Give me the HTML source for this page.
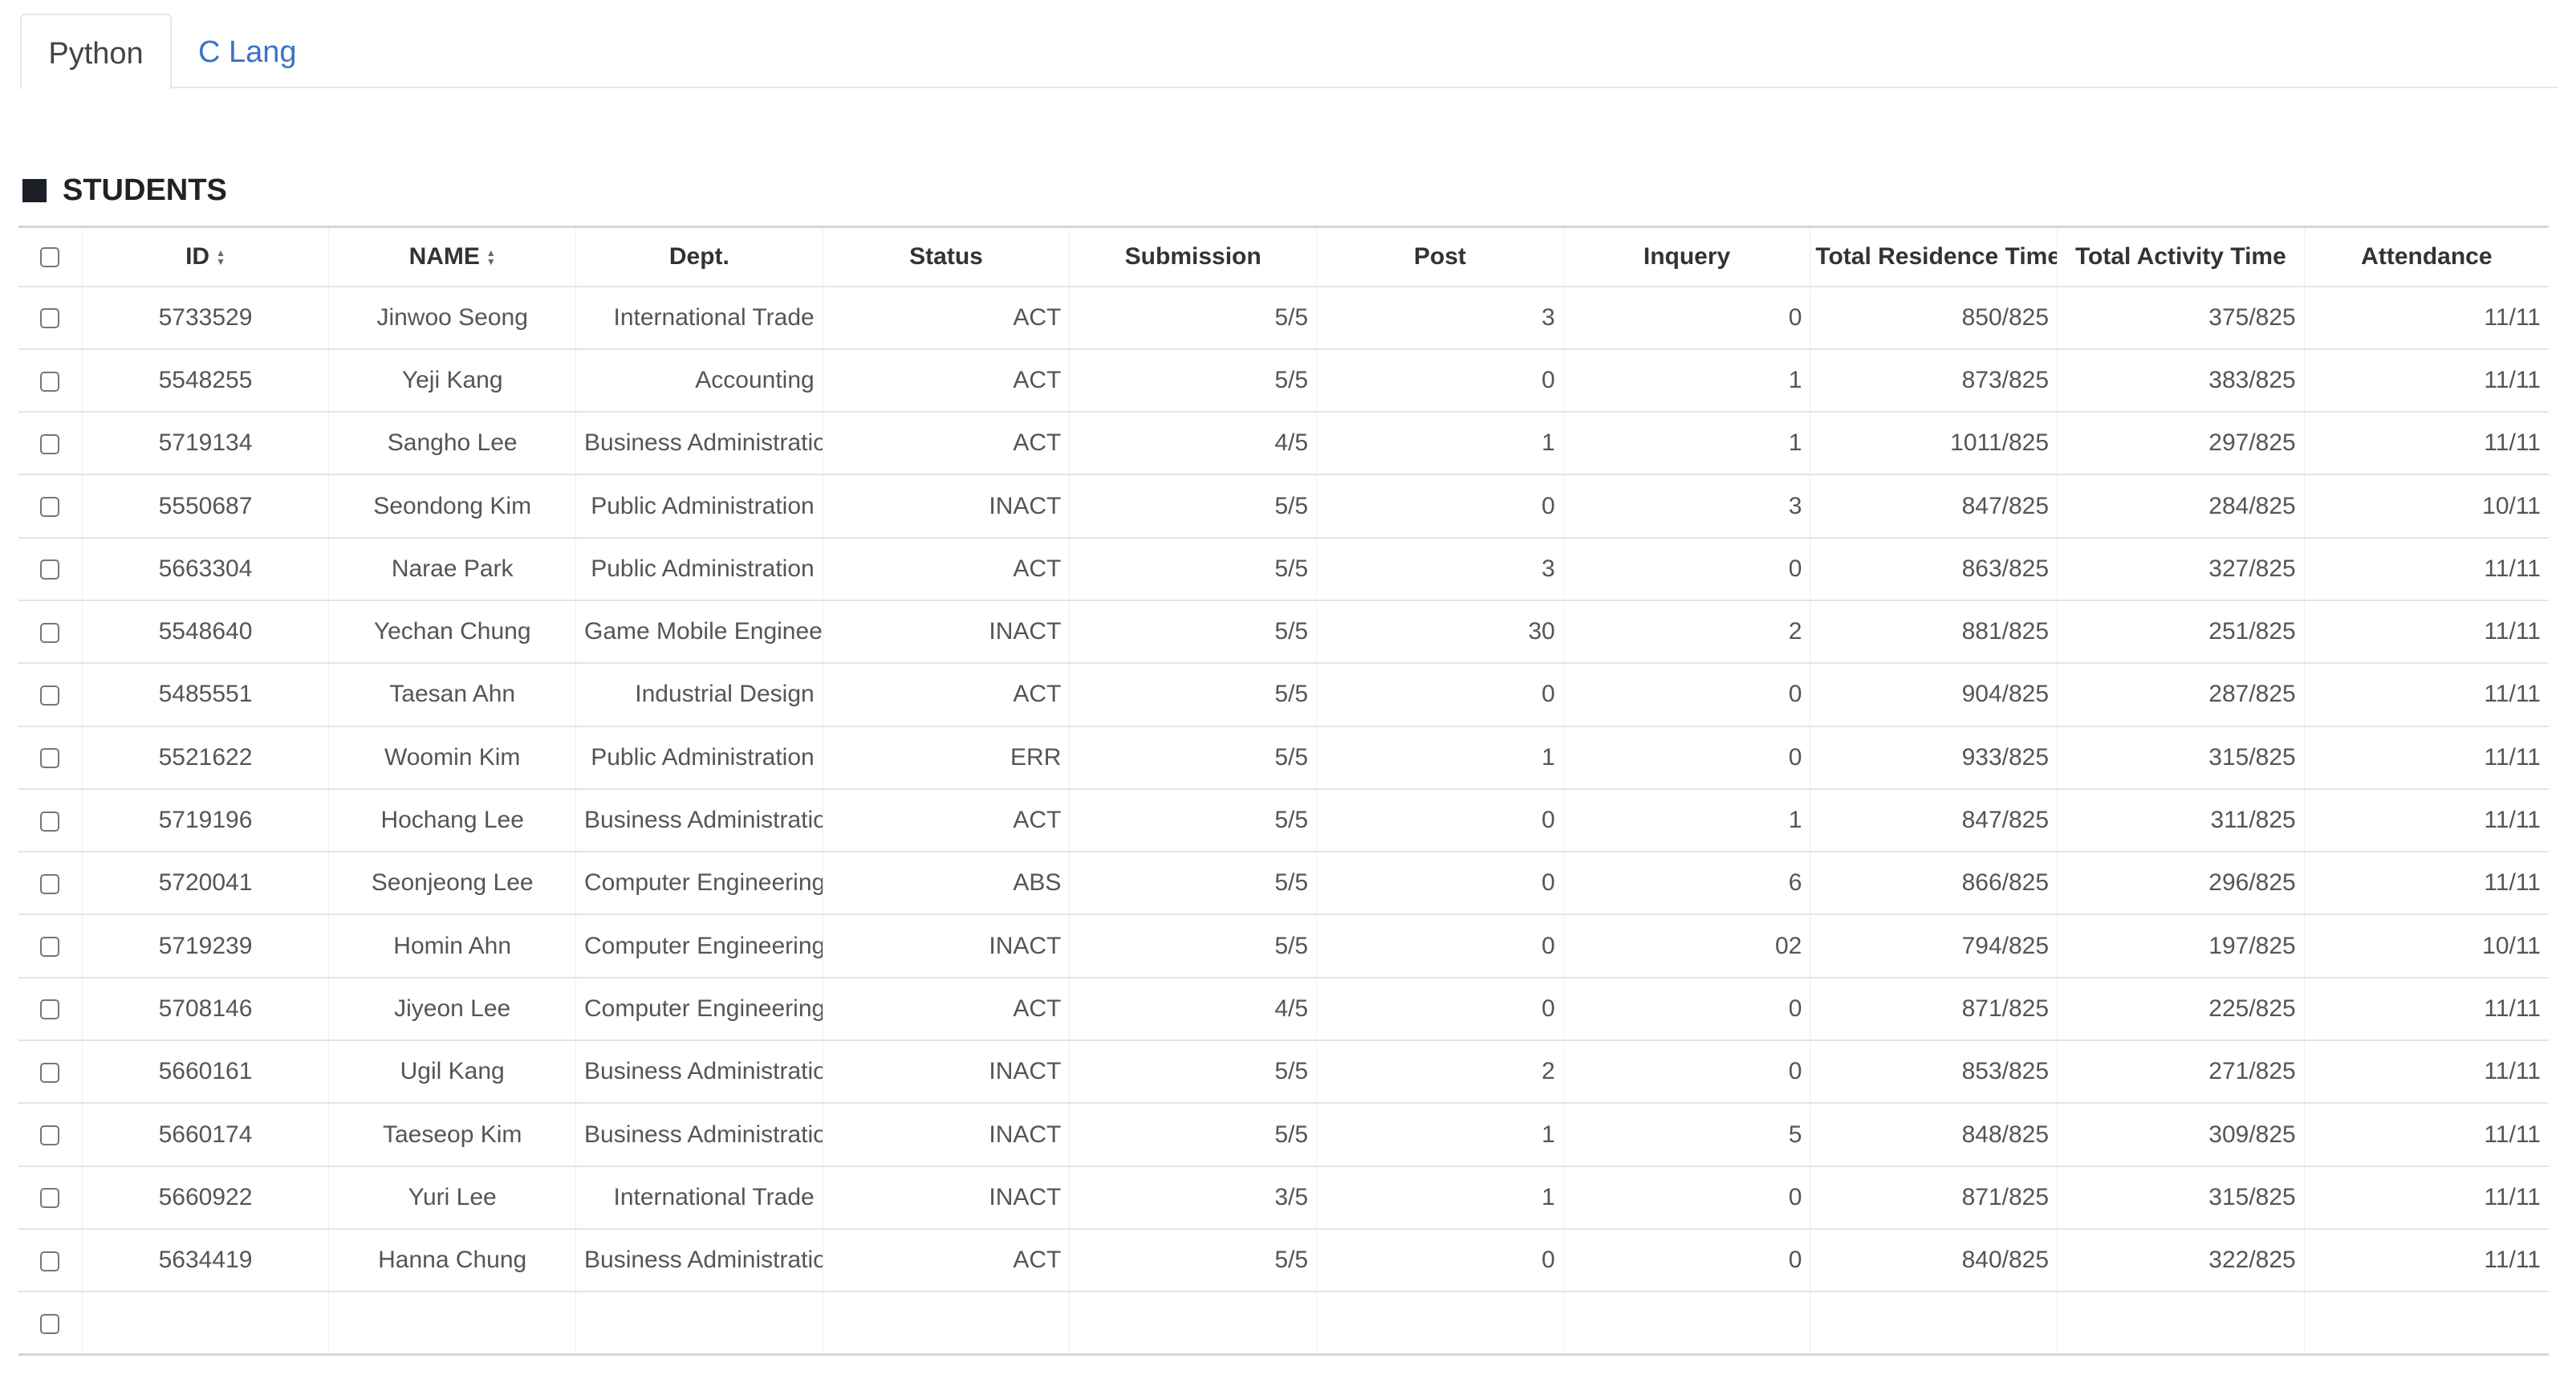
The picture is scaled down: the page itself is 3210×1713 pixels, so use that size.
<!DOCTYPE html>
<html><head><meta charset="utf-8"><style>
*{margin:0;padding:0;box-sizing:border-box}
body{width:3210px;height:1713px;background:#fff;position:relative;overflow:hidden;font-family:"Liberation Sans",Arial,sans-serif}
.tabline{position:absolute;left:213px;right:22px;top:108px;height:2px;background:#e8e8e8}
.tab{position:absolute;left:25px;top:17px;width:189px;height:94px;border:2px solid #e6e6e6;border-bottom:none;border-radius:6px 6px 0 0;background:#fff;font-size:38px;color:#444;text-align:center;line-height:96px}
.tab2{position:absolute;left:247px;top:20px;font-size:38px;color:#3d72c8;line-height:90px}
.sq{position:absolute;left:28px;top:223px;width:30px;height:29px;background:#1c1f26}
.title{position:absolute;left:78px;top:214px;font-size:38px;font-weight:bold;color:#222;line-height:46px}
table{position:absolute;left:23px;top:281px;width:3153px;border-collapse:collapse;table-layout:fixed;border-top:3px solid #d6d6d6;border-bottom:3px solid #d6d6d6}
td,th{border-right:1px solid #efefef;border-bottom:2px solid #e4e4e4;white-space:nowrap;overflow:hidden;font-size:30px;color:#555;padding:0 10px;text-align:right}
td:last-child,th:last-child{border-right:none}
th{height:74px;font-weight:bold;color:#333;text-align:center;font-size:30px}
td{height:78.3px}
td.c,th.c{text-align:center}
.cb{display:inline-block;width:24px;height:25px;border:2px solid #777;border-radius:5px;vertical-align:middle}
.s{display:inline-block;vertical-align:middle;margin-left:8px;font-size:12px;line-height:11px;color:#666}
</style></head><body>
<div class="tabline"></div>
<div class="tab">Python</div>
<div class="tab2">C Lang</div>
<div class="sq"></div>
<div class="title">STUDENTS</div>
<table>
<colgroup><col style="width:79px"><col style="width:307px"><col style="width:307px"><col style="width:307px"><col style="width:307px"><col style="width:307px"><col style="width:307px"><col style="width:307px"><col style="width:307px"><col style="width:307px"><col style="width:304px"></colgroup>
<tr><th class="c"><span class="cb"></span></th><th>ID<span class="s">▲<br>▼</span></th><th>NAME<span class="s">▲<br>▼</span></th><th>Dept.</th><th>Status</th><th>Submission</th><th>Post</th><th>Inquery</th><th style="text-align:left;padding:0 6px">Total Residence Time</th><th>Total Activity Time</th><th>Attendance</th></tr>
<tr><td class="c"><span class="cb"></span></td><td class="c">5733529</td><td class="c">Jinwoo Seong</td><td>International Trade</td><td>ACT</td><td>5/5</td><td>3</td><td>0</td><td>850/825</td><td>375/825</td><td>11/11</td></tr>
<tr><td class="c"><span class="cb"></span></td><td class="c">5548255</td><td class="c">Yeji Kang</td><td>Accounting</td><td>ACT</td><td>5/5</td><td>0</td><td>1</td><td>873/825</td><td>383/825</td><td>11/11</td></tr>
<tr><td class="c"><span class="cb"></span></td><td class="c">5719134</td><td class="c">Sangho Lee</td><td>Business Administration</td><td>ACT</td><td>4/5</td><td>1</td><td>1</td><td>1011/825</td><td>297/825</td><td>11/11</td></tr>
<tr><td class="c"><span class="cb"></span></td><td class="c">5550687</td><td class="c">Seondong Kim</td><td>Public Administration</td><td>INACT</td><td>5/5</td><td>0</td><td>3</td><td>847/825</td><td>284/825</td><td>10/11</td></tr>
<tr><td class="c"><span class="cb"></span></td><td class="c">5663304</td><td class="c">Narae Park</td><td>Public Administration</td><td>ACT</td><td>5/5</td><td>3</td><td>0</td><td>863/825</td><td>327/825</td><td>11/11</td></tr>
<tr><td class="c"><span class="cb"></span></td><td class="c">5548640</td><td class="c">Yechan Chung</td><td>Game Mobile Engineering</td><td>INACT</td><td>5/5</td><td>30</td><td>2</td><td>881/825</td><td>251/825</td><td>11/11</td></tr>
<tr><td class="c"><span class="cb"></span></td><td class="c">5485551</td><td class="c">Taesan Ahn</td><td>Industrial Design</td><td>ACT</td><td>5/5</td><td>0</td><td>0</td><td>904/825</td><td>287/825</td><td>11/11</td></tr>
<tr><td class="c"><span class="cb"></span></td><td class="c">5521622</td><td class="c">Woomin Kim</td><td>Public Administration</td><td>ERR</td><td>5/5</td><td>1</td><td>0</td><td>933/825</td><td>315/825</td><td>11/11</td></tr>
<tr><td class="c"><span class="cb"></span></td><td class="c">5719196</td><td class="c">Hochang Lee</td><td>Business Administration</td><td>ACT</td><td>5/5</td><td>0</td><td>1</td><td>847/825</td><td>311/825</td><td>11/11</td></tr>
<tr><td class="c"><span class="cb"></span></td><td class="c">5720041</td><td class="c">Seonjeong Lee</td><td>Computer Engineering</td><td>ABS</td><td>5/5</td><td>0</td><td>6</td><td>866/825</td><td>296/825</td><td>11/11</td></tr>
<tr><td class="c"><span class="cb"></span></td><td class="c">5719239</td><td class="c">Homin Ahn</td><td>Computer Engineering</td><td>INACT</td><td>5/5</td><td>0</td><td>02</td><td>794/825</td><td>197/825</td><td>10/11</td></tr>
<tr><td class="c"><span class="cb"></span></td><td class="c">5708146</td><td class="c">Jiyeon Lee</td><td>Computer Engineering</td><td>ACT</td><td>4/5</td><td>0</td><td>0</td><td>871/825</td><td>225/825</td><td>11/11</td></tr>
<tr><td class="c"><span class="cb"></span></td><td class="c">5660161</td><td class="c">Ugil Kang</td><td>Business Administration</td><td>INACT</td><td>5/5</td><td>2</td><td>0</td><td>853/825</td><td>271/825</td><td>11/11</td></tr>
<tr><td class="c"><span class="cb"></span></td><td class="c">5660174</td><td class="c">Taeseop Kim</td><td>Business Administration</td><td>INACT</td><td>5/5</td><td>1</td><td>5</td><td>848/825</td><td>309/825</td><td>11/11</td></tr>
<tr><td class="c"><span class="cb"></span></td><td class="c">5660922</td><td class="c">Yuri Lee</td><td>International Trade</td><td>INACT</td><td>3/5</td><td>1</td><td>0</td><td>871/825</td><td>315/825</td><td>11/11</td></tr>
<tr><td class="c"><span class="cb"></span></td><td class="c">5634419</td><td class="c">Hanna Chung</td><td>Business Administration</td><td>ACT</td><td>5/5</td><td>0</td><td>0</td><td>840/825</td><td>322/825</td><td>11/11</td></tr>
<tr><td class="c"><span class="cb"></span></td><td></td><td></td><td></td><td></td><td></td><td></td><td></td><td></td><td></td><td></td></tr>
</table>
</body></html>
